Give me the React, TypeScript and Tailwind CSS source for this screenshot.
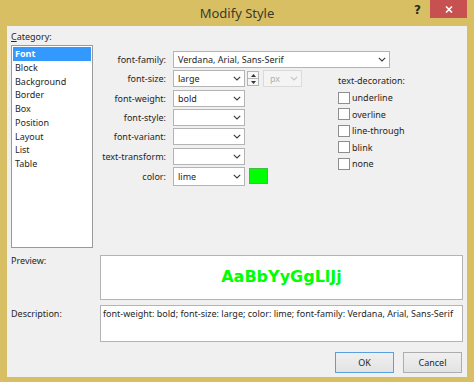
import React from "react";

const Chevron = ({ light = false }: { light?: boolean }) => (
  <svg width="8" height="5" viewBox="0 0 8 5" className="shrink-0">
    <polyline points="0.8,0.8 4,4 7.2,0.8" fill="none" stroke={light ? "#c4c4c4" : "#3a3a3a"} strokeWidth="1.1" />
  </svg>
);

const Select = ({ value, w, h = "h-[17px]" }: { value: string; w: string; h?: string }) => (
  <div className={`${w} ${h} flex items-center justify-between bg-white border border-[#b4b4b4] pl-[4px] pr-[3px] shrink-0`}>
    <span className="leading-none">{value}</span>
    <Chevron />
  </div>
);

const Label = ({ children }: { children: React.ReactNode }) => (
  <div className="w-[73px] text-right pr-0 shrink-0 leading-[17px]">{children}</div>
);

const Check = ({ label }: { label: string }) => (
  <div className="h-[12px] flex items-center gap-[2px]">
    <div className="w-[12px] h-[12px] bg-white border border-[#8e8e8e] shrink-0" />
    <span className="leading-none">{label}</span>
  </div>
);

export default function App() {
  const cats = ["Font", "Block", "Background", "Border", "Box", "Position", "Layout", "List", "Table"];
  return (
    <div className="w-[474px] h-[382px] bg-[#d8bf63] flex flex-col font-['Noto_Sans',sans-serif] text-[9px] text-[#262626]">
      {/* Title bar */}
      <div className="h-[26px] grid grid-cols-[1fr_auto_1fr] shrink-0">
        <div />
        <div className="text-[13px] text-[#3b3a2c] leading-[26px] pb-[1px]">Modify Style</div>
        <div className="flex justify-end items-start pr-[7px]">
          <div className="text-[12px] font-bold text-[#2a2a20] leading-[20px] mr-[9px] font-['DejaVu_Sans',sans-serif]">?</div>
          <div className="w-[37px] h-[18px] bg-[#c75050] flex items-center justify-center">
            <svg width="8" height="7" viewBox="0 0 8 7">
              <line x1="1" y1="0.5" x2="7" y2="6.5" stroke="#fff" strokeWidth="1.6" />
              <line x1="7" y1="0.5" x2="1" y2="6.5" stroke="#fff" strokeWidth="1.6" />
            </svg>
          </div>
        </div>
      </div>

      {/* Content */}
      <div className="mx-[7px] mb-[5px] flex-1 bg-[#f0f0f0] flex flex-col">
        {/* Top section */}
        <div className="flex h-[222px] shrink-0">
          <div className="w-[86px] pl-[4px] flex flex-col shrink-0">
            <div className="mt-[4px] leading-[14px]">
              <span className="underline underline-offset-1">C</span>ategory:
            </div>
            <div className="mt-[1px] w-[82px] h-[203px] bg-white border border-[#9a9a9a] p-px flex flex-col">
              {cats.map((c, i) => (
                <div
                  key={c}
                  className={`h-[13.75px] leading-[13.75px] pl-[2px] ${i === 0 ? "bg-[#3399ff] text-white font-bold" : ""}`}
                >
                  {c}
                </div>
              ))}
            </div>
          </div>

          <div className="flex flex-col pt-[25px]">
            <div className="flex h-[17px] gap-[7px]">
              <Label>font-family:</Label>
              <Select value="Verdana, Arial, Sans-Serif" w="w-[217px]" />
            </div>
            <div className="flex mt-[2.33px]">
              <div className="w-[209px] flex flex-col gap-[2.33px] shrink-0">
                <div className="flex h-[17px] gap-[7px]">
                  <Label>font-size:</Label>
                  <Select value="large" w="w-[72px]" />
                  <div className="ml-[-5px] mt-[1px] w-[12px] h-[15px] border border-[#b4b4b4] bg-[#f7f7f7] flex flex-col shrink-0">
                    <div className="flex-1 flex items-center justify-center border-b border-[#b4b4b4]">
                      <svg width="5" height="3" viewBox="0 0 5 3"><polygon points="0,3 2.5,0 5,3" fill="#333" /></svg>
                    </div>
                    <div className="flex-1 flex items-center justify-center">
                      <svg width="5" height="3" viewBox="0 0 5 3"><polygon points="0,0 2.5,3 5,0" fill="#333" /></svg>
                    </div>
                  </div>
                  <div className="ml-[-3px] w-[39px] h-[17px] border border-[#dadada] bg-[#f4f4f4] flex items-center justify-between pl-[6px] pr-[3px] text-[#b0b0b0]">
                    <span className="leading-none">px</span>
                    <Chevron light />
                  </div>
                </div>
                <div className="flex h-[17px] gap-[7px]">
                  <Label>font-weight:</Label>
                  <Select value="bold" w="w-[72px]" />
                </div>
                <div className="flex h-[17px] gap-[7px]">
                  <Label>font-style:</Label>
                  <Select value="" w="w-[72px]" />
                </div>
                <div className="flex h-[17px] gap-[7px]">
                  <Label>font-variant:</Label>
                  <Select value="" w="w-[72px]" />
                </div>
                <div className="flex h-[17px] gap-[7px]">
                  <Label>text-transform:</Label>
                  <Select value="" w="w-[72px]" />
                </div>
                <div className="flex h-[19px] gap-[7px]">
                  <div className="w-[73px] text-right shrink-0 leading-[19px]">color:</div>
                  <Select value="lime" w="w-[72px]" h="h-[19px]" />
                  <div className="ml-[-3px] mt-[1px] w-[19px] h-[16px] bg-[#00ff00] border border-[#3fbf3f]" />
                </div>
              </div>
              <div className="ml-[36px] flex flex-col">
                <div className="mt-[4px] leading-[14px]">text-decoration:</div>
                <div className="mt-[3.67px] flex flex-col gap-[4.5px]">
                  <Check label="underline" />
                  <Check label="overline" />
                  <Check label="line-through" />
                  <Check label="blink" />
                  <Check label="none" />
                </div>
              </div>
            </div>
          </div>
        </div>

        {/* Preview */}
        <div className="flex mt-[7px] shrink-0">
          <div className="w-[93px] pl-[4px] leading-[12px] shrink-0">Preview:</div>
          <div className="w-[363px] h-[45px] bg-white border border-[#b4b4b4] flex items-center justify-center">
            <span className="font-['DejaVu_Sans',sans-serif] font-bold text-[16px] text-[#00ff00] leading-none pb-[1px]">
              AaBbYyGgLlJj
            </span>
          </div>
        </div>

        {/* Description */}
        <div className="flex mt-[5px] shrink-0">
          <div className="w-[93px] pl-[4px] leading-[12px] mt-[3px] shrink-0">Description:</div>
          <div className="w-[363px] h-[37px] bg-white border border-[#b4b4b4] px-[2px] pt-[2px] leading-[12px] whitespace-nowrap overflow-hidden">
            font-weight: bold; font-size: large; color: lime; font-family: Verdana, Arial, Sans-Serif
          </div>
        </div>

        {/* Buttons */}
        <div className="flex justify-end gap-[9px] pr-[5px] mt-[10px] shrink-0">
          <div className="w-[59px] h-[21px] border border-[#5aa0e0] bg-gradient-to-b from-[#f0f0f0] to-[#e3e3e3] flex items-center justify-center leading-none">
            OK
          </div>
          <div className="w-[59px] h-[21px] border border-[#adadad] bg-gradient-to-b from-[#f0f0f0] to-[#e3e3e3] flex items-center justify-center leading-none">
            Cancel
          </div>
        </div>
      </div>
    </div>
  );
}
